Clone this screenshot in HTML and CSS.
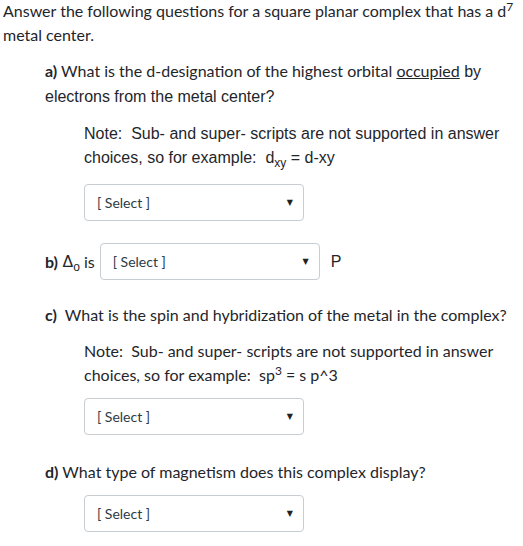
FILE: index.html
```html
<!DOCTYPE html>
<html>
<head>
<meta charset="utf-8">
<link rel="stylesheet" href="styles.css">
</head>
<body>
<div class="page">
  <p class="intro">Answer the following questions for a square planar complex that has a d<sup>7</sup> metal center.</p>

  <div class="q">
    <p class="qtext"><b>a)</b> What is the d-designation of the highest orbital <u>occupied</u><span class="arial"> by electrons from the metal center?</span></p>
    <div class="inner">
      <p class="note arial">Note:&nbsp; Sub- and super- scripts are not supported in answer choices, so for example:&nbsp; d<sub>xy</sub> = d-xy</p>
      <div class="select"><span class="sel-text">[ Select ]</span><span class="arrow">▼</span></div>
    </div>
  </div>

  <div class="q row-b">
    <b class="lbl">b)</b><span class="arial delta">&nbsp;Δ<sub>o</sub></span><span class="is">&nbsp;is</span>
    <div class="select select-b"><span class="sel-text">[ Select ]</span><span class="arrow">▼</span></div>
    <span class="arial p">P</span>
  </div>

  <div class="q q-c">
    <p class="qtext"><b>c)</b>&nbsp; What is the spin and hybridization of the metal in the complex?</p>
    <div class="inner">
      <p class="note">Note:&nbsp; Sub- and super- scripts are not supported in answer choices, so for example:&nbsp; sp<sup>3</sup> = s p^3</p>
      <div class="select"><span class="sel-text">[ Select ]</span><span class="arrow">▼</span></div>
    </div>
  </div>

  <div class="q q-d">
    <p class="qtext"><b>d)</b> What type of magnetism does this complex display?</p>
    <div class="inner">
      <div class="select"><span class="sel-text">[ Select ]</span><span class="arrow">▼</span></div>
    </div>
  </div>
</div>
</body>
</html>
```

FILE: styles.css
```css
html, body {
  margin: 0;
  padding: 0;
  background: #ffffff;
}
body {
  font-family: "Lato", "Liberation Sans", sans-serif;
  font-size: 16px;
  line-height: 24px;
  color: #1f262b;
}
.page {
  padding: 0 3px;
  margin-top: -1px;
}
p {
  margin: 0;
}
.arial {
  font-family: "Liberation Sans", Arial, sans-serif;
}
sup, sub {
  font-size: 12px;
  line-height: 0;
}
.intro {
  margin-bottom: 12px;
}
.q {
  padding-left: 42px;
}
.qtext b {
  font-weight: 700;
}
.inner {
  padding-left: 39px;
}
.note {
  margin-top: 13px;
}
.select {
  box-sizing: border-box;
  width: 220px;
  height: 37px;
  margin-top: 14px;
  border: 1px solid #c7cdd1;
  border-radius: 4px;
  display: flex;
  align-items: center;
  justify-content: space-between;
  padding: 0 10px 0 12px;
  background: #fff;
}
.sel-text {
  font-size: 14px;
  color: #2d3b45;
}
.arrow {
  font-family: "DejaVu Sans", sans-serif;
  font-size: 8px;
  color: #222;
}
.row-b {
  display: flex;
  align-items: center;
  margin-top: 22px;
}
.row-b .select {
  margin: 0 0 0 5px;
}
.p {
  margin-left: 11px;
}
.q-c {
  margin-top: 23px;
}
.q-c .note {
  margin-top: 12px;
}
.q-c .select {
  margin-top: 11px;
}
.q-d {
  margin-top: 25px;
}
.q-d .select {
  margin-top: 11px;
}
```
